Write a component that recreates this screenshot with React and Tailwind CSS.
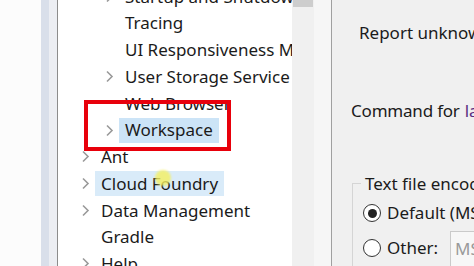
import React from 'react';

const rows = [
  { label: 'Startup and Shutdown', level: 2, arrow: true },
  { label: 'Tracing', level: 2 },
  { label: 'UI Responsiveness Monitoring', level: 2 },
  { label: 'User Storage Service', level: 2, arrow: true },
  { label: 'Web Browser', level: 2 },
  { label: 'Workspace', level: 2, arrow: true, selected: true },
  { label: 'Ant', level: 1, arrow: true },
  { label: 'Cloud Foundry', level: 1, arrow: true, hover: true },
  { label: 'Data Management', level: 1, arrow: true },
  { label: 'Gradle', level: 1 },
  { label: 'Help', level: 1, arrow: true },
];

function Chevron() {
  return (
    <svg width="9" height="13" viewBox="0 0 9 13" className="ml-[4px]">
      <path d="M2 1.5 L7 6.5 L2 11.5" fill="none" stroke="#9a9a9a" strokeWidth="1.6" />
    </svg>
  );
}

function TreeRow({ row }) {
  const pad = row.level === 2 ? 'pl-[43px]' : 'pl-[19px]';
  let bg = '';
  if (row.selected) bg = 'bg-[#cce4f7]';
  if (row.hover) bg = 'bg-[#d9ebf9]';
  return (
    <div className={`flex items-center h-[26.75px] whitespace-nowrap ${pad}`}>
      <div className="w-[18px] shrink-0 flex items-center">{row.arrow && <Chevron />}</div>
      <span className={`shrink-0 h-[25px] flex items-center px-[6px] ${bg}`}>{row.label}</span>
    </div>
  );
}

function Radio({ checked }) {
  return (
    <div className="shrink-0 w-[18px] h-[18px] rounded-full border border-[#333] bg-white flex items-center justify-center">
      {checked && <div className="w-[9px] h-[9px] rounded-full bg-[#222]" />}
    </div>
  );
}

export default function App() {
  return (
    <div
      className="relative flex w-[474px] h-[266px] overflow-hidden text-[17px] text-[#1b1b1b]"
      style={{ fontFamily: '"Noto Sans", "Noto Sans CJK KR", sans-serif' }}
    >
      <div className="w-[41px] shrink-0 bg-[#fcfcfc]" />
      <div className="w-[8px] shrink-0 bg-[#d9dfea]" />
      <div className="w-[8px] shrink-0 bg-[#eceef3]" />
      <div className="w-[1px] shrink-0 bg-[#8c8c8c]" />

      {/* tree */}
      <div className="w-[234px] shrink-0 bg-white overflow-hidden">
        <div className="mt-[-17px]">
          {rows.map((r) => (
            <TreeRow key={r.label} row={r} />
          ))}
        </div>
      </div>

      {/* scrollbar */}
      <div className="w-[22px] shrink-0 bg-[#f0f0f0]">
        <div className="h-[7px] mx-[1px] bg-[#cdcdcd]" />
      </div>
      <div className="w-[17px] shrink-0 bg-[#f6f6f6]" />
      <div className="w-[1px] shrink-0 bg-[#a0a0a0]" />

      {/* right panel */}
      <div className="flex-1 min-w-0 bg-[#f0f0f0] whitespace-nowrap overflow-hidden">
        <div className="mt-[20px] h-[26px] flex items-center pl-[27px]">Report unknown identifiers</div>
        <div className="mt-[52px] h-[26px] flex items-center pl-[19px] tracking-[-0.2px]">
          Command for <span className="text-[#5a2d82] ml-[5px]">launching</span>
        </div>
        <div className="mt-[59px] ml-[20px] border-t border-l border-[#d5d5d5] h-[200px]">
          <div className="-mt-[13px] ml-[8px] h-[26px] flex">
            <span className="px-[4px] flex items-center bg-[#f0f0f0]">Text file encoding</span>
          </div>
          <div className="mt-[3px] h-[26px] flex items-center pl-[10px] gap-[6px]">
            <Radio checked />
            <span className="shrink-0">Default (MS949)</span>
          </div>
          <div className="mt-[9px] h-[26px] flex items-center pl-[10px] gap-[6px]">
            <Radio />
            <span className="shrink-0">Other:</span>
            <div className="shrink-0 self-start ml-[6px] -mt-[4px] h-[40px] w-[60px] border border-[#cacaca] bg-[#f7f7f7] pl-[4px] pt-[4px] text-[#9a9a9a]">
              MS949
            </div>
          </div>
        </div>
      </div>

      {/* annotation box */}
      <div className="absolute left-[84px] top-[100px] w-[147px] h-[51px] border-4 border-[#e8000b]" />
      {/* cursor highlight */}
      <div className="absolute left-[155px] top-[170px] w-[16px] h-[16px] rounded-full bg-[#f5f060] opacity-80 blur-[1px]" />
    </div>
  );
}
